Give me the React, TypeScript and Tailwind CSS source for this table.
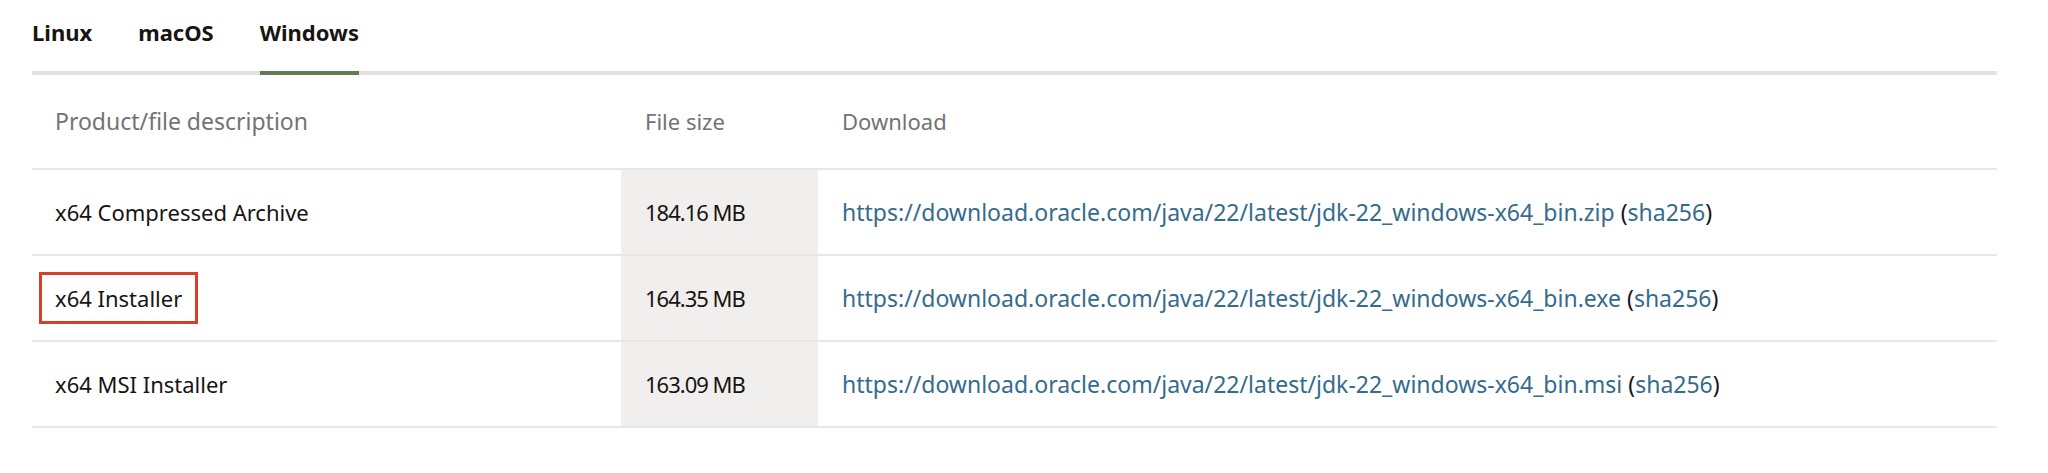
import React from 'react';

interface FileRow {
    description: string;
    size: string;
    url: string;
    highlight?: boolean;
}

const tabs = ['Linux', 'macOS', 'Windows'];

const rows: FileRow[] = [
    {
        description: 'x64 Compressed Archive',
        size: '184.16 MB',
        url: 'https://download.oracle.com/java/22/latest/jdk-22_windows-x64_bin.zip',
    },
    {
        description: 'x64 Installer',
        size: '164.35 MB',
        url: 'https://download.oracle.com/java/22/latest/jdk-22_windows-x64_bin.exe',
        highlight: true,
    },
    {
        description: 'x64 MSI Installer',
        size: '163.09 MB',
        url: 'https://download.oracle.com/java/22/latest/jdk-22_windows-x64_bin.msi',
    },
];

const App: React.FC = () => {
    const active = 'Windows';

    return (
        <div
            className="w-[2048px] h-[473px] bg-white text-[#161513] pl-[32px] pr-[51px]"
            style={{ fontFamily: '"Noto Sans", "Open Sans", sans-serif' }}
        >
            {/* tabs */}
            <div className="flex border-b-4 border-[#e4e2de]">
                {tabs.map((tab) => (
                    <div
                        key={tab}
                        className={
                            tab === active
                                ? 'mr-[46px] pt-[16px] pb-[23px] -mb-[4px] border-b-4 border-[#5f7c52] text-[22px] font-bold leading-[32px]'
                                : 'mr-[46px] pt-[16px] pb-[23px] text-[22px] font-bold leading-[32px]'
                        }
                    >
                        {tab}
                    </div>
                ))}
            </div>

            {/* table */}
            <div className="grid grid-cols-[589px_197px_1fr]">
                <div className="h-[95px] flex items-center pl-[23px] text-[23px] text-[#737373] border-b-2 border-[#e8e7e5]">
                    Product/file description
                </div>
                <div className="h-[95px] flex items-center pl-[24px] text-[22px] text-[#737373] border-b-2 border-[#e8e7e5]">
                    File size
                </div>
                <div className="h-[95px] flex items-center pl-[24px] text-[22px] text-[#737373] border-b-2 border-[#e8e7e5]">
                    Download
                </div>

                {rows.map((row) => (
                    <React.Fragment key={row.url}>
                        <div className="h-[86px] flex items-center pl-[7px] border-b-2 border-[#e8e7e5] text-[22px] leading-[30px]">
                            <span
                                className={
                                    row.highlight
                                        ? 'px-[13px] py-[8px] border-[3px] border-[#d5402b]'
                                        : 'px-[16px] py-[11px]'
                                }
                            >
                                {row.description}
                            </span>
                        </div>
                        <div className="h-[86px] flex items-center pl-[24px] bg-[#f1efed] border-b-2 border-[#e8e7e5] text-[22px] tracking-[-1px]">
                            {row.size}
                        </div>
                        <div className="h-[86px] flex items-center pl-[24px] border-b-2 border-[#e8e7e5] text-[23px]">
                            <span>
                                <a href={row.url} className="text-[#356b8c]">
                                    {row.url}
                                </a>{' '}
                                (<a href={row.url + '.sha256'} className="text-[#356b8c]">sha256</a>)
                            </span>
                        </div>
                    </React.Fragment>
                ))}
            </div>
        </div>
    );
};

export default App;
